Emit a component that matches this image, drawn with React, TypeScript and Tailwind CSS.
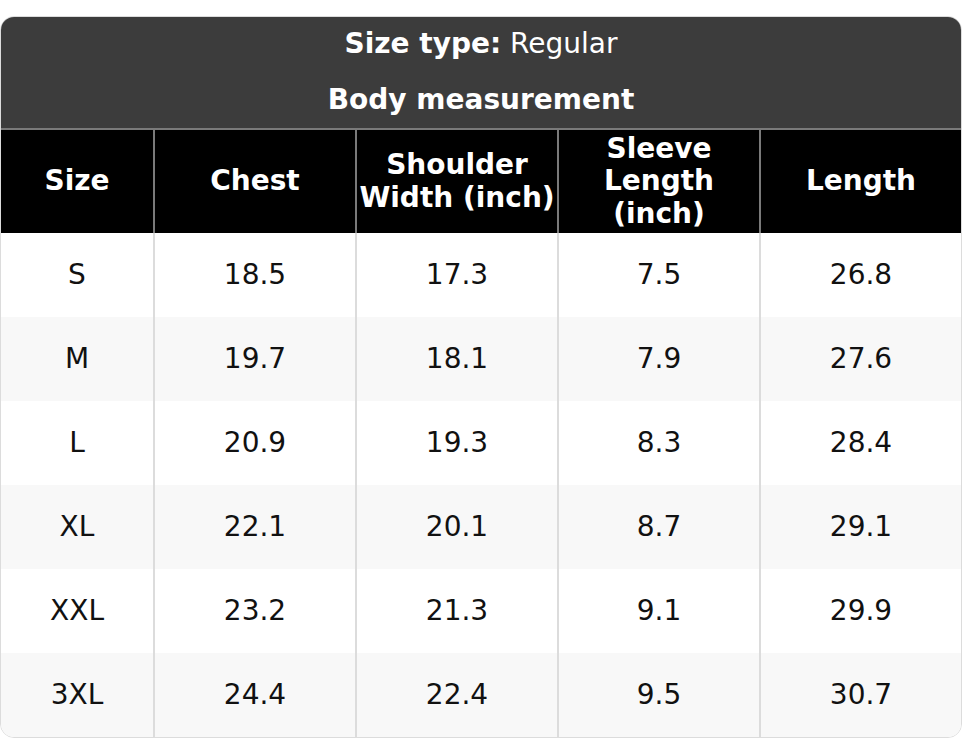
import React from 'react';

const columns = ['Size', 'Chest', 'Shoulder Width (inch)', 'Sleeve Length (inch)', 'Length'];

const rows = [
  ['S', '18.5', '17.3', '7.5', '26.8'],
  ['M', '19.7', '18.1', '7.9', '27.6'],
  ['L', '20.9', '19.3', '8.3', '28.4'],
  ['XL', '22.1', '20.1', '8.7', '29.1'],
  ['XXL', '23.2', '21.3', '9.1', '29.9'],
  ['3XL', '24.4', '22.4', '9.5', '30.7'],
];

const App: React.FC = () => {
  return (
    <div className="w-[962px] bg-white pt-4 font-['DejaVu_Sans',sans-serif] text-[28px] leading-[32.5px]">
      <div className="overflow-hidden rounded-[14px] border border-[#dcdcdc]">
        {/* Title */}
        <div className="bg-[#3c3c3c] text-white text-center">
          <div className="h-[55px] flex items-center justify-center">
            <span className="font-bold">Size type:</span>&nbsp;Regular
          </div>
          <div className="h-[56px] flex items-center justify-center font-bold">Body measurement</div>
        </div>

        {/* Header row */}
        <div className="grid grid-cols-[152px_202px_202px_202px_1fr] bg-black text-white font-bold text-center border-t-2 border-[#7a7a7a]">
          {columns.map((col, i) => (
            <div
              key={col}
              className={`h-[103px] flex items-center justify-center ${i > 0 ? 'border-l-2 border-[#7a7a7a]' : ''}`}
            >
              {col}
            </div>
          ))}
        </div>

        {/* Body rows */}
        {rows.map((row, r) => (
          <div
            key={row[0]}
            className={`grid grid-cols-[152px_202px_202px_202px_1fr] text-center text-[#111] ${r % 2 === 1 ? 'bg-[#f8f8f8]' : 'bg-white'}`}
          >
            {row.map((cell, i) => (
              <div
                key={i}
                className={`h-[84px] flex items-center justify-center ${i > 0 ? 'border-l-2 border-[#dcdcdc]' : ''}`}
              >
                {cell}
              </div>
            ))}
          </div>
        ))}
      </div>
    </div>
  );
};

export default App;
